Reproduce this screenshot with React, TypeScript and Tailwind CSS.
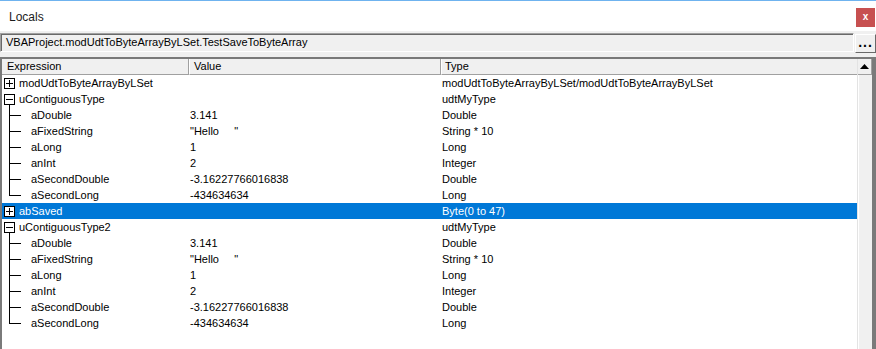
import React from "react";

type Row = {
  name: string;
  value: string;
  type: string;
  level: 0 | 1;
  toggle?: "plus" | "minus";
  last?: boolean;
  selected?: boolean;
};

const members = (): Row[] => [
  { name: "aDouble", value: "3.141", type: "Double", level: 1 },
  { name: "aFixedString", value: "\"Hello     \"", type: "String * 10", level: 1 },
  { name: "aLong", value: "1", type: "Long", level: 1 },
  { name: "anInt", value: "2", type: "Integer", level: 1 },
  { name: "aSecondDouble", value: "-3.16227766016838", type: "Double", level: 1 },
  { name: "aSecondLong", value: "-434634634", type: "Long", level: 1, last: true },
];

const rows: Row[] = [
  {
    name: "modUdtToByteArrayByLSet",
    value: "",
    type: "modUdtToByteArrayByLSet/modUdtToByteArrayByLSet",
    level: 0,
    toggle: "plus",
  },
  { name: "uContiguousType", value: "", type: "udtMyType", level: 0, toggle: "minus" },
  ...members(),
  { name: "abSaved", value: "", type: "Byte(0 to 47)", level: 0, toggle: "plus", selected: true },
  { name: "uContiguousType2", value: "", type: "udtMyType", level: 0, toggle: "minus" },
  ...members(),
];

const ToggleBox = ({ kind }: { kind: "plus" | "minus" }) => (
  <svg width="11" height="11" viewBox="0 0 11 11" className="block">
    <rect x="0.5" y="0.5" width="10" height="10" fill="#fff" stroke="#000" />
    <line x1="2" y1="5.5" x2="9" y2="5.5" stroke="#000" />
    {kind === "plus" && <line x1="5.5" y1="2" x2="5.5" y2="9" stroke="#000" />}
  </svg>
);

const TreeRow = ({ row }: { row: Row }) => {
  const text = row.selected ? "text-white" : "text-black";
  return (
    <div className={`flex h-4 items-center ${row.selected ? "bg-[#0078d7]" : ""} ${text}`}>
      <div className="relative flex h-4 w-[187px] shrink-0 items-center">
        {row.level === 0 ? (
          <>
            <div className="ml-[2px] w-[11px]">
              <ToggleBox kind={row.toggle ?? "plus"} />
            </div>
            {row.toggle === "minus" && (
              <span className="absolute left-[7px] top-[13px] h-[3px] w-px bg-black" />
            )}
            <span className="ml-[4px] whitespace-pre">{row.name}</span>
          </>
        ) : (
          <>
            <span
              className={`absolute left-[7px] top-0 w-px bg-black ${row.last ? "h-[8px]" : "h-4"}`}
            />
            <span className="absolute left-[7px] top-[8px] h-px w-[12px] bg-black" />
            <span className="ml-[29px] whitespace-pre">{row.name}</span>
          </>
        )}
      </div>
      <div className="w-[252px] shrink-0 whitespace-pre pl-px">{row.value}</div>
      <div className="min-w-0 flex-1 whitespace-pre pl-px">{row.type}</div>
    </div>
  );
};

export default function App() {
  return (
    <div
      className="h-[349px] w-[876px] overflow-hidden border-t border-[#6fb3ef] bg-[#f0f0f0] text-[11px] leading-none"
      style={{ fontFamily: '"Liberation Sans", Arial, sans-serif' }}
    >
      {/* title bar */}
      <div className="flex h-[30px] items-start justify-between bg-white">
        <span className="ml-[9px] mt-[10px] text-[12px] text-[#1b1b1b]">Locals</span>
        <button className="mr-px mt-[7px] flex h-[19px] w-[19px] items-center justify-center bg-[#c75050] pb-px text-[10px] font-bold text-white">
          x
        </button>
      </div>

      {/* context combo */}
      <div className="flex items-start pt-[2px]">
        <div className="flex h-[19px] w-[854px] items-center border-l border-t border-b border-r border-t-[#a0a0a0] border-l-[#a0a0a0] border-b-white border-r-white bg-[#f0f0f0] pl-[5px] shadow-[inset_1px_1px_0_#696969]">
          VBAProject.modUdtToByteArrayByLSet.TestSaveToByteArray
        </div>
        <button className="ml-px mt-px flex h-[19px] flex-1 items-end justify-center border-l border-t border-b border-r border-t-white border-l-white border-b-[#696969] border-r-[#696969] bg-[#f0f0f0] pb-[3px] text-[14px] font-bold leading-none tracking-[1px] text-black">
          ...
        </button>
      </div>

      {/* locals tree */}
      <div className="mt-[4px] flex h-[300px] border-l-2 border-t-2 border-r-[4px] border-l-[#7a7a7a] border-t-[#7a7a7a] border-r-[#7a7a7a] bg-white">
        <div className="min-w-0 flex-1">
          <div className="flex h-4 bg-[#f0f0f0] text-black">
            <div className="flex w-[187px] shrink-0 items-center border-b border-r border-b-[#a0a0a0] border-r-[#a0a0a0] pl-[5px]">
              Expression
            </div>
            <div className="flex w-[252px] shrink-0 items-center border-b border-l border-r border-b-[#a0a0a0] border-l-white border-r-[#a0a0a0] pl-[4px]">
              Value
            </div>
            <div className="flex flex-1 items-center border-b border-l border-b-[#a0a0a0] border-l-white pl-[3px]">
              Type
            </div>
          </div>
          {rows.map((row, i) => (
            <TreeRow key={i} row={row} />
          ))}
        </div>
        <div className="flex w-[15px] shrink-0 flex-col border-l border-[#e3e3e3] bg-[#f0f0f0]">
          <div className="flex h-4 items-center justify-center border-b border-r border-b-[#a0a0a0] border-r-[#a0a0a0] bg-[#f0f0f0]">
            <svg width="9" height="5" viewBox="0 0 9 5">
              <path d="M0 5 L4.5 0 L9 5 Z" fill="#000" />
            </svg>
          </div>
          <div className="flex-1 border-l border-white" />
        </div>
      </div>
    </div>
  );
}
